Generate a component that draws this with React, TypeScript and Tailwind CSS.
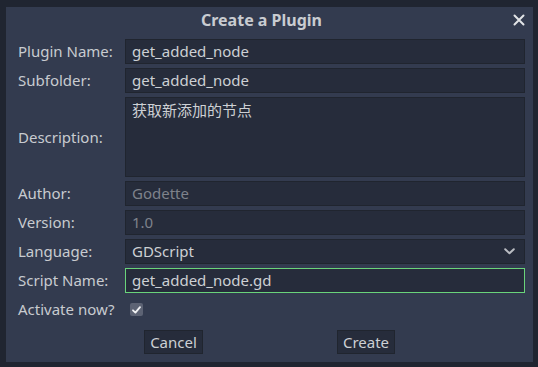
import React from 'react';

const font = { fontFamily: '"Noto Sans", "Noto Sans CJK SC", sans-serif' };

function Field({ value, placeholder, focus }: { value?: string; placeholder?: string; focus?: boolean }) {
  return (
    <div
      className={
        'h-[25px] flex items-center px-[6px] bg-[#262c3b] border ' +
        (focus ? 'border-[#6ad47a]' : 'border-[#20252f]')
      }
    >
      {value ? (
        <span className="text-[#cdd0d4]">{value}</span>
      ) : (
        <span className="text-[#7e828b]">{placeholder}</span>
      )}
    </div>
  );
}

function Label({ children }: { children: React.ReactNode }) {
  return <div className="flex items-center text-[#c8cbd0]">{children}</div>;
}

export default function App() {
  return (
    <div className="w-[538px] h-[367px] bg-[#202531] pt-[7px] pl-[6px] pr-[5px] pb-[5px] text-[15px] leading-none" style={font}>
      <div className="h-full flex flex-col bg-[#333b4f]">
        <div className="relative h-[25px] flex items-center justify-center pr-[16px]">
          <span className="font-bold text-[16px] text-[#c9ccd1]">Create a Plugin</span>
          <svg className="absolute right-[8px] top-[7px]" width="12" height="12" viewBox="0 0 12 12">
            <path d="M1.5 1.5 L10.5 10.5 M10.5 1.5 L1.5 10.5" stroke="#e2e4e7" strokeWidth="2" strokeLinecap="round" />
          </svg>
        </div>

        <div className="grid grid-cols-[107px_1fr] gap-y-[4px] pt-[7px] pl-[12px] pr-[8px]">
          <Label>Plugin Name:</Label>
          <Field value="get_added_node" />

          <Label>Subfolder:</Label>
          <Field value="get_added_node" />

          <Label>Description:</Label>
          <div className="h-[80px] px-[6px] pt-[5px] bg-[#262c3b] border border-[#20252f] text-[#cdd0d4]">
            获取新添加的节点
          </div>

          <Label>Author:</Label>
          <Field placeholder="Godette" />

          <Label>Version:</Label>
          <Field placeholder="1.0" />

          <Label>Language:</Label>
          <div className="h-[25px] flex items-center justify-between pl-[6px] pr-[9px] bg-[#262c3b] border border-[#20252f]">
            <span className="text-[#cdd0d4]">GDScript</span>
            <svg width="11" height="7" viewBox="0 0 11 7">
              <path d="M1.2 1.2 L5.5 5.3 L9.8 1.2" fill="none" stroke="#b9bcc2" strokeWidth="2" strokeLinecap="round" strokeLinejoin="round" />
            </svg>
          </div>

          <Label>Script Name:</Label>
          <Field value="get_added_node.gd" focus />

          <Label>Activate now?</Label>
          <div className="h-[25px] flex items-center pl-[5px]">
            <div className="w-[13px] h-[13px] rounded-[2px] bg-[#5d6374] flex items-center justify-center">
              <svg width="9" height="8" viewBox="0 0 9 8">
                <path d="M1 4.3 L3.4 6.6 L8 1.2" fill="none" stroke="#f0f1f3" strokeWidth="1.8" strokeLinecap="round" strokeLinejoin="round" />
              </svg>
            </div>
          </div>
        </div>

        <div className="flex pt-[8px] pl-[138px] gap-[134px]">
          <div className="w-[59px] h-[24px] flex items-center justify-center bg-[#262c3b] border border-[#20252f] text-[#cdd0d4]">
            Cancel
          </div>
          <div className="w-[58px] h-[24px] flex items-center justify-center bg-[#262c3b] border border-[#20252f] text-[#cdd0d4]">
            Create
          </div>
        </div>
      </div>
    </div>
  );
}
